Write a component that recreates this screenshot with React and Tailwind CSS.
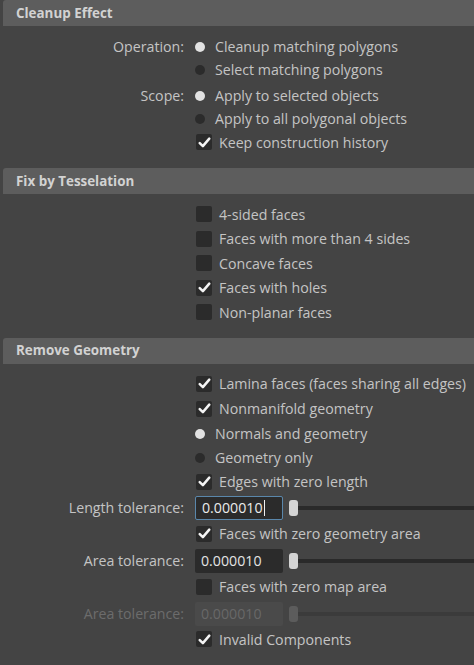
import React from "react";

const font = { fontFamily: '"Open Sans", "Noto Sans", sans-serif' };

function Header({ title }) {
	return (
		<div className="ml-[3px] flex h-[26px] items-center rounded-tl-[3px] bg-[#5d5d5d] pl-[13px] text-[13.4px] font-bold text-[#d2d2d2]">
			{title}
		</div>
	);
}

function Check({ checked, disabled }) {
	return (
		<span className={`flex h-4 w-4 shrink-0 items-center justify-center rounded-[2px] ${disabled ? "bg-[#3a3a3a]" : "bg-[#2b2b2b]"}`}>
			{checked && (
				<svg width="13" height="13" viewBox="0 0 12 12" fill="none">
					<path d="M1.6 6.5 L4.5 9.3 L10.4 2.4" stroke="#f4f4f4" strokeWidth="2.3" strokeLinecap="round" strokeLinejoin="round" />
				</svg>
			)}
		</span>
	);
}

function Radio({ on }) {
	return (
		<span className={`block h-[10px] w-[10px] shrink-0 rounded-full ${on ? "bg-[#e2e2e2]" : "bg-[#2b2b2b]"}`} />
	);
}

function Row({ h, label, disabled, children }) {
	return (
		<div className="flex items-center" style={{ height: h }}>
			<div className={`w-[185px] shrink-0 whitespace-nowrap pr-[1px] text-right ${disabled ? "text-[#6c6c6c]" : "text-[#c4c4c4]"}`}>
				{label}
			</div>
			<div className="flex min-w-0 flex-1 items-center">{children}</div>
		</div>
	);
}

function CheckItem({ checked, text }) {
	return (
		<div className="ml-[11px] flex items-center gap-[7px] text-[#c4c4c4]">
			<Check checked={checked} />
			<span className="whitespace-nowrap">{text}</span>
		</div>
	);
}

function RadioItem({ on, text }) {
	return (
		<div className="ml-[10px] flex items-center gap-[10px] text-[#c4c4c4]">
			<Radio on={on} />
			<span className="whitespace-nowrap">{text}</span>
		</div>
	);
}

function Field({ value, focused, disabled }) {
	return (
		<div className="ml-[10px] flex flex-1 items-center">
			<div
				className={`flex h-[24px] w-[88px] shrink-0 items-center rounded-[2px] pl-[6px] ${
					focused
						? "border border-[#5a87ab] bg-[#2b2b2b] text-[#ececec]"
						: disabled
							? "bg-[#4a4a4a] text-[#686868]"
							: "bg-[#2b2b2b] text-[#e4e4e4]"
				}`}
			>
				<span>{value}</span>
				{focused && <span className="ml-[1px] h-[16px] w-px bg-[#f0f0f0]" />}
			</div>
			<div className={`ml-[6px] h-4 w-[9px] shrink-0 rounded-[3px] ${disabled ? "bg-[#5c5c5c]" : "bg-[#d4d4d4]"}`} />
			<div className={`h-1 flex-1 ${disabled ? "bg-[#3b3b3b]" : "bg-[#2a2a2a]"}`} />
		</div>
	);
}

export default function App() {
	return (
		<div className="h-[665px] w-[474px] overflow-hidden bg-[#444444] text-[14.2px]" style={font}>
			<Header title="Cleanup Effect" />
			<div className="pt-[9.5px] pb-[13.5px]">
				<Row h={23} label="Operation:">
					<RadioItem on text="Cleanup matching polygons" />
				</Row>
				<Row h={23}>
					<RadioItem text="Select matching polygons" />
				</Row>
				<div className="h-[3px]" />
				<Row h={23} label="Scope:">
					<RadioItem on text="Apply to selected objects" />
				</Row>
				<Row h={23}>
					<RadioItem text="Apply to all polygonal objects" />
				</Row>
				<Row h={24}>
					<CheckItem checked text="Keep construction history" />
				</Row>
			</div>

			<Header title="Fix by Tesselation" />
			<div className="pt-[8px] pb-[13px]">
				<Row h={24.5}>
					<CheckItem text="4-sided faces" />
				</Row>
				<Row h={24.5}>
					<CheckItem text="Faces with more than 4 sides" />
				</Row>
				<Row h={24.5}>
					<CheckItem text="Concave faces" />
				</Row>
				<Row h={24.5}>
					<CheckItem checked text="Faces with holes" />
				</Row>
				<Row h={24.5}>
					<CheckItem text="Non-planar faces" />
				</Row>
			</div>

			<Header title="Remove Geometry" />
			<div className="pt-[8px]">
				<Row h={25}>
					<CheckItem checked text="Lamina faces (faces sharing all edges)" />
				</Row>
				<Row h={25}>
					<CheckItem checked text="Nonmanifold geometry" />
				</Row>
				<Row h={25}>
					<RadioItem on text="Normals and geometry" />
				</Row>
				<Row h={23}>
					<RadioItem text="Geometry only" />
				</Row>
				<Row h={25}>
					<CheckItem checked text="Edges with zero length" />
				</Row>
				<Row h={26} label="Length tolerance:">
					<Field value="0.000010" focused />
				</Row>
				<Row h={27}>
					<CheckItem checked text="Faces with zero geometry area" />
				</Row>
				<Row h={26} label="Area tolerance:">
					<Field value="0.000010" />
				</Row>
				<Row h={27}>
					<CheckItem text="Faces with zero map area" />
				</Row>
				<Row h={26} label="Area tolerance:" disabled>
					<Field value="0.000010" disabled />
				</Row>
				<Row h={26}>
					<CheckItem checked text="Invalid Components" />
				</Row>
			</div>
		</div>
	);
}
